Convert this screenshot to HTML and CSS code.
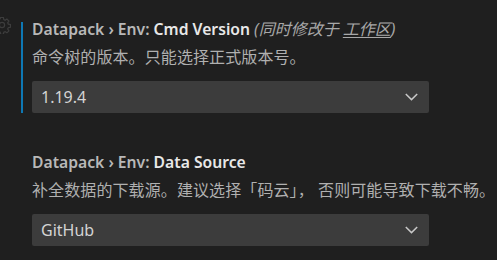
FILE: index.html
```html
<!DOCTYPE html>
<html lang="zh-CN">
<head>
<meta charset="utf-8">
<title>Settings</title>
<link rel="stylesheet" href="styles.css">
</head>
<body>
<div class="page">
  <svg class="gear" width="18" height="18" viewBox="0 0 18 18" aria-hidden="true">
    <g fill="none" stroke="#3d3d3d" stroke-width="1.2">
      <path d="M7.6 1.5h2.8l.4 2.1 1.3.6 1.8-1.2 2 2-1.2 1.8.6 1.3 2.1.4v2.8l-2.1.4-.6 1.3 1.2 1.8-2 2-1.8-1.2-1.3.6-.4 2.1H7.6l-.4-2.1-1.3-.6-1.8 1.2-2-2 1.2-1.8-.6-1.3-2.1-.4V7.6l2.1-.4.6-1.3-1.2-1.8 2-2 1.8 1.2 1.3-.6z"/>
      <circle cx="9" cy="9" r="2.6"/>
    </g>
  </svg>
  <div class="item focused">
    <div class="title"><span class="cat">Datapack › Env: </span><span class="label">Cmd Version</span><span class="mod">(同时修改于 <span class="link">工作区</span>)</span></div>
    <div class="desc">命令树的版本。只能选择正式版本号。</div>
    <div class="select">
      <span class="value">1.19.4</span>
      <svg class="chev" width="13" height="8" viewBox="0 0 13 8" aria-hidden="true"><path d="M0.8 1 L6.5 6.6 L12.2 1" fill="none" stroke="#c8c8c8" stroke-width="1.5"/></svg>
    </div>
  </div>
  <div class="item">
    <div class="title"><span class="cat">Datapack › Env: </span><span class="label">Data Source</span></div>
    <div class="desc">补全数据的下载源。建议选择「码云」， 否则可能导致下载不畅。</div>
    <div class="select">
      <span class="value">GitHub</span>
      <svg class="chev" width="13" height="8" viewBox="0 0 13 8" aria-hidden="true"><path d="M0.8 1 L6.5 6.6 L12.2 1" fill="none" stroke="#c8c8c8" stroke-width="1.5"/></svg>
    </div>
  </div>
</div>
</body>
</html>
```

FILE: styles.css
```css
html, body {
  margin: 0;
  background: #1f1f1f;
  overflow: hidden;
}
body {
  font-family: "Noto Sans", "Noto Sans CJK SC", sans-serif;
  font-size: 16px;
  color: #cccccc;
}
.page {
  position: relative;
  padding-top: 22px;
  padding-left: 21px;
  width: 408px;
}
.gear {
  position: absolute;
  left: -7px;
  top: 16px;
}
.item {
  border-left: 2px solid transparent;
  padding-left: 9px;
}
.item.focused {
  border-left-color: #0e78b4;
}
.item + .item {
  margin-top: 42px;
}
.title {
  font-size: 15.7px;
  line-height: 14px;
  font-weight: 600;
  white-space: nowrap;
}
.cat {
  color: #b8b8b8;
}
.label {
  color: #e8e8e8;
}
.mod {
  font-size: 16px;
  font-style: italic;
  font-weight: 400;
  color: #a8a8a8;
  margin-left: 4px;
}
.link {
  text-decoration: underline;
  text-underline-offset: 2px;
}
.desc {
  margin-top: 10px;
  line-height: 22px;
  color: #b0b0b0;
  white-space: nowrap;
  letter-spacing: 0.1px;
}
.select {
  margin-top: 13px;
  height: 32px;
  width: 397px;
  box-sizing: border-box;
  background: #3c3c3c;
  border-radius: 2px;
  display: flex;
  align-items: center;
  justify-content: space-between;
  padding: 0 11px 0 9px;
  color: #d4d4d4;
}
.chev {
  display: block;
}
```
